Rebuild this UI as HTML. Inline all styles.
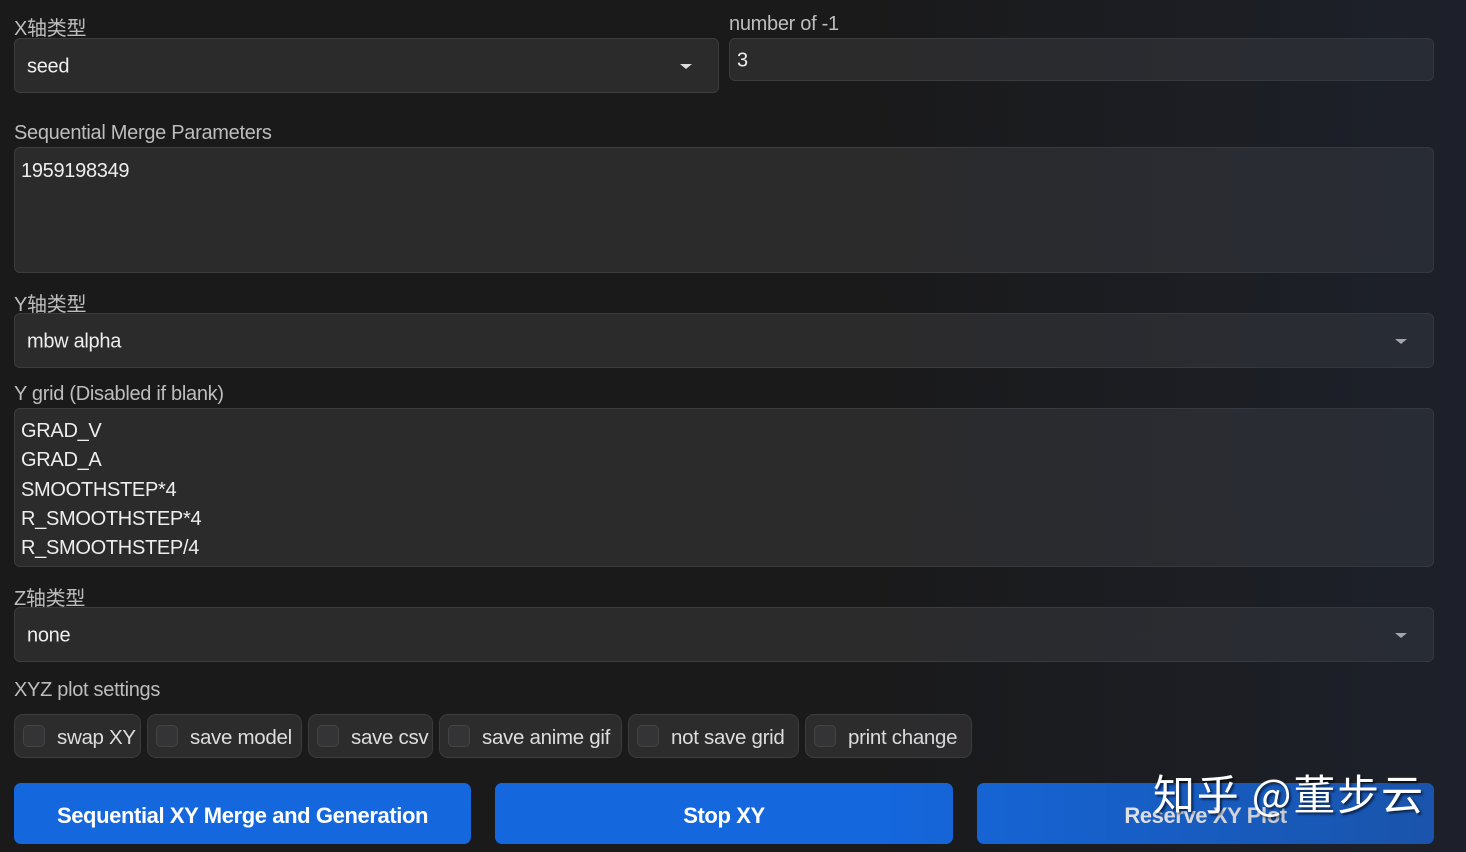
<!DOCTYPE html>
<html><head><meta charset="utf-8"><style>
*{box-sizing:border-box;margin:0;padding:0}
body{width:1466px;height:852px;background:#1a1a1b;position:relative;overflow:hidden;font-family:"Liberation Sans","Noto Sans CJK SC",sans-serif;color:#e6e6e6;font-size:20px}
.ov{position:absolute;inset:0;background:linear-gradient(90deg,rgba(0,0,0,0) 0%,rgba(0,0,0,0) 60%,rgba(35,45,70,.35) 100%);pointer-events:none;z-index:5}
.a{position:absolute}
.lbl{color:#bdbdbd;font-size:20px;letter-spacing:-0.3px}
.box{background:#2b2b2c;border:1px solid #3c3c3e;border-radius:6px}
.sel span{position:absolute;left:12px;top:50%;transform:translateY(-45%);color:#eee;letter-spacing:-0.3px}
.arr{position:absolute;right:26px;top:50%;margin-top:-2px;width:0;height:0;border-left:6px solid transparent;border-right:6px solid transparent;border-top:5px solid #ddd}
.ta{padding:9px 6px;line-height:29.3px;color:#eee;letter-spacing:-0.3px}
.chip{height:44px;top:714px;background:#2c2c2d;border:1px solid #3c3c3e;border-radius:9px;display:flex;align-items:center;padding-left:8px;padding-top:3px;color:#ddd;font-size:20.5px;letter-spacing:-0.3px}
.chip i{width:22px;height:22px;background:#343436;border:1px solid #444;border-radius:5px;margin-right:12px;flex:none;margin-top:-3px}
.btn{top:783px;height:61px;background:#1567dd;border-radius:7px;color:#fff;font-weight:bold;font-size:22px;display:flex;align-items:center;justify-content:center;letter-spacing:-0.4px;padding-top:4px}
.wm{position:absolute;left:1153px;top:762px;font-size:42px;color:#fff;z-index:6;font-family:"Noto Sans CJK SC",sans-serif;text-shadow:2px 2px 2px rgba(0,0,0,.6);letter-spacing:1.8px}
</style></head><body>
<div class="a lbl" style="left:14px;top:12px">X轴类型</div>
<div class="a box sel" style="left:14px;top:38px;width:705px;height:55px"><span>seed</span><div class="arr"></div></div>
<div class="a lbl" style="left:729px;top:13px">number of -1</div>
<div class="a box sel" style="left:729px;top:38px;width:705px;height:43px"><span style="left:7px">3</span></div>
<div class="a lbl" style="left:14px;top:122px">Sequential Merge Parameters</div>
<div class="a box ta" style="left:14px;top:147px;width:1420px;height:126px">1959198349</div>
<div class="a lbl" style="left:14px;top:288px">Y轴类型</div>
<div class="a box sel" style="left:14px;top:313px;width:1420px;height:55px"><span>mbw alpha</span><div class="arr"></div></div>
<div class="a lbl" style="left:14px;top:383px">Y grid (Disabled if blank)</div>
<div class="a box ta" style="left:14px;top:408px;width:1420px;height:159px;padding-top:8px">GRAD_V<br>GRAD_A<br>SMOOTHSTEP*4<br>R_SMOOTHSTEP*4<br>R_SMOOTHSTEP/4</div>
<div class="a lbl" style="left:14px;top:582px">Z轴类型</div>
<div class="a box sel" style="left:14px;top:607px;width:1420px;height:55px"><span>none</span><div class="arr"></div></div>
<div class="a lbl" style="left:14px;top:679px">XYZ plot settings</div>
<div class="a chip" style="left:14px;width:127px"><i></i>swap XY</div>
<div class="a chip" style="left:147px;width:155px"><i></i>save model</div>
<div class="a chip" style="left:308px;width:125px"><i></i>save csv</div>
<div class="a chip" style="left:439px;width:183px"><i></i>save anime gif</div>
<div class="a chip" style="left:628px;width:171px"><i></i>not save grid</div>
<div class="a chip" style="left:805px;width:167px"><i></i>print change</div>
<div class="a btn" style="left:14px;width:457px">Sequential XY Merge and Generation</div>
<div class="a btn" style="left:495px;width:458px">Stop XY</div>
<div class="a btn" style="left:977px;width:457px">Reserve XY Plot</div>
<div class="ov"></div>
<div class="wm">知乎 @董步云</div>
</body></html>
